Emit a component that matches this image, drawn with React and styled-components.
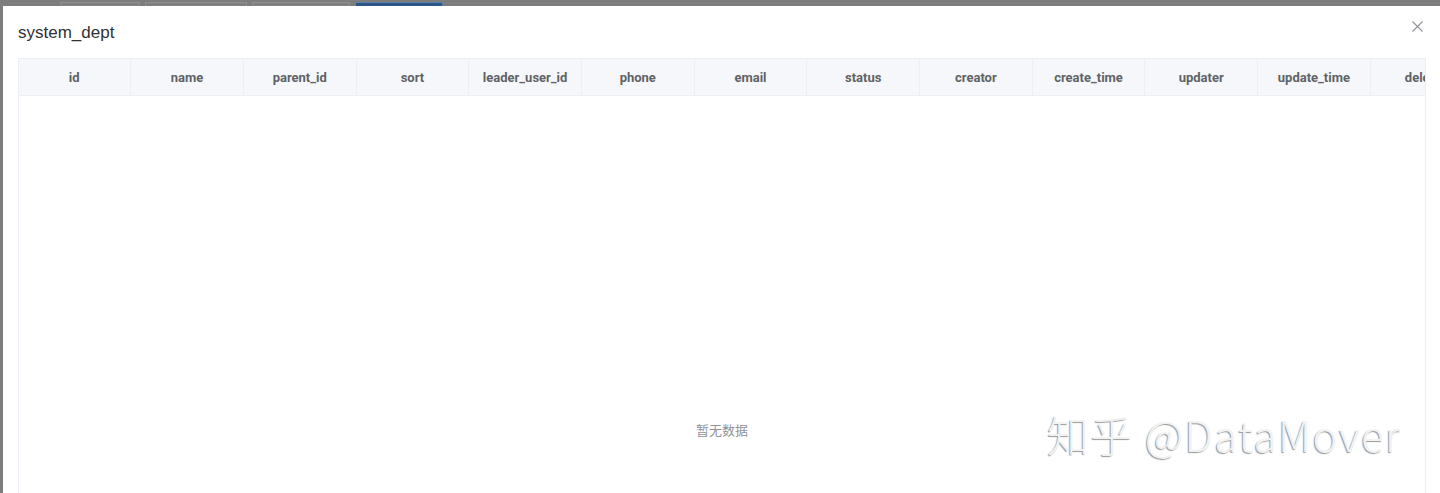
import React from 'react';
import styled, { createGlobalStyle } from 'styled-components';

const columns = [
  'id',
  'name',
  'parent_id',
  'sort',
  'leader_user_id',
  'phone',
  'email',
  'status',
  'creator',
  'create_time',
  'updater',
  'update_time',
  'deleted',
  'tenant_id',
];

const tabs = [
  { width: 80, active: false },
  { width: 102, active: false },
  { width: 98, active: false },
  { width: 88, active: true },
];

const App = () => {
  return (
    <Page>
      <GlobalStyle />
      <TabStrip>
        {tabs.map((tab, index) => (
          <Tab key={index} $active={tab.active} style={{ width: tab.width }} />
        ))}
      </TabStrip>
      <Dialog>
        <DialogHeader>
          <Title>system_dept</Title>
          <CloseButton aria-label="close">
            <svg width="11" height="11" viewBox="0 0 11 11">
              <path d="M0.5 0.5 L10.5 10.5 M10.5 0.5 L0.5 10.5" stroke="#909399" strokeWidth="1.1" fill="none" />
            </svg>
          </CloseButton>
        </DialogHeader>
        <TableWrap>
          <Table>
            <colgroup>
              {columns.map((col) => (
                <col key={col} style={{ width: 112.7 }} />
              ))}
            </colgroup>
            <thead>
              <tr>
                {columns.map((col) => (
                  <HeadCell key={col}>{col}</HeadCell>
                ))}
              </tr>
            </thead>
          </Table>
          <EmptyBody>
            <EmptyText>暂无数据</EmptyText>
          </EmptyBody>
        </TableWrap>
      </Dialog>
      <Watermark>知乎 @DataMover</Watermark>
    </Page>
  );
};

export default App;

const GlobalStyle = createGlobalStyle`
  body {
    margin: 0;
    overflow: hidden;
    font-family: "Liberation Sans", "Noto Sans CJK SC", Arial, sans-serif;
  }
`;

const Page = styled.div`
  position: relative;
  width: 1440px;
  height: 493px;
  overflow: hidden;
  background: #7d7d7d;
  display: flex;
  flex-direction: column;
`;

const TabStrip = styled.div`
  height: 6px;
  display: flex;
  gap: 5px;
  padding: 2px 0 0 60px;
  box-sizing: border-box;
  flex-shrink: 0;
`;

const Tab = styled.div`
  height: 100%;
  box-sizing: border-box;
  border: 1px solid ${(p) => (p.$active ? '#5f7fa6' : '#8e8e8e')};
  border-bottom: none;
  background: ${(p) => (p.$active ? '#2c5688' : '#808080')};
`;

const Dialog = styled.div`
  flex: 1;
  margin-left: 3px;
  background: #fff;
  display: flex;
  flex-direction: column;
  min-height: 0;
`;

const DialogHeader = styled.div`
  display: flex;
  justify-content: space-between;
  align-items: flex-start;
  padding: 15px 13px 0 15px;
`;

const Title = styled.span`
  font-size: 17px;
  line-height: 24px;
  color: #303133;
`;

const CloseButton = styled.button`
  margin-top: -4px;
  padding: 4px;
  border: none;
  background: transparent;
  display: flex;
  cursor: pointer;
`;

const TableWrap = styled.div`
  margin: 13px 14px 0 15px;
  border: 1px solid #ebeef5;
  border-bottom: none;
  overflow: hidden;
  flex: 1;
  min-height: 0;
`;

const Table = styled.table`
  table-layout: fixed;
  border-collapse: collapse;
  margin-left: -1px;
  width: ${columns.length * 112.7}px;
`;

const HeadCell = styled.th`
  height: 36px;
  padding: 0;
  background: #f5f7fa;
  border-right: 1px solid #ebeef5;
  border-bottom: 1px solid #ebeef5;
  font-family: Roboto, "Liberation Sans", Arial, sans-serif;
  font-size: 13px;
  font-weight: 700;
  color: #606266;
  text-align: center;
  white-space: nowrap;
  overflow: hidden;
`;

const EmptyBody = styled.div`
  height: 666px;
  display: flex;
  align-items: center;
  justify-content: center;
`;

const EmptyText = styled.span`
  font-family: "Noto Sans CJK SC", sans-serif;
  font-size: 13px;
  color: #909399;
`;

const Watermark = styled.div`
  position: absolute;
  left: 1047px;
  top: 403px;
  font-family: "Noto Sans CJK SC", sans-serif;
  font-size: 42px;
  font-weight: 300;
  letter-spacing: 1.5px;
  color: #f2f2f2;
  text-shadow: -1px 1px 1px #999;
  pointer-events: none;
  white-space: nowrap;
`;
